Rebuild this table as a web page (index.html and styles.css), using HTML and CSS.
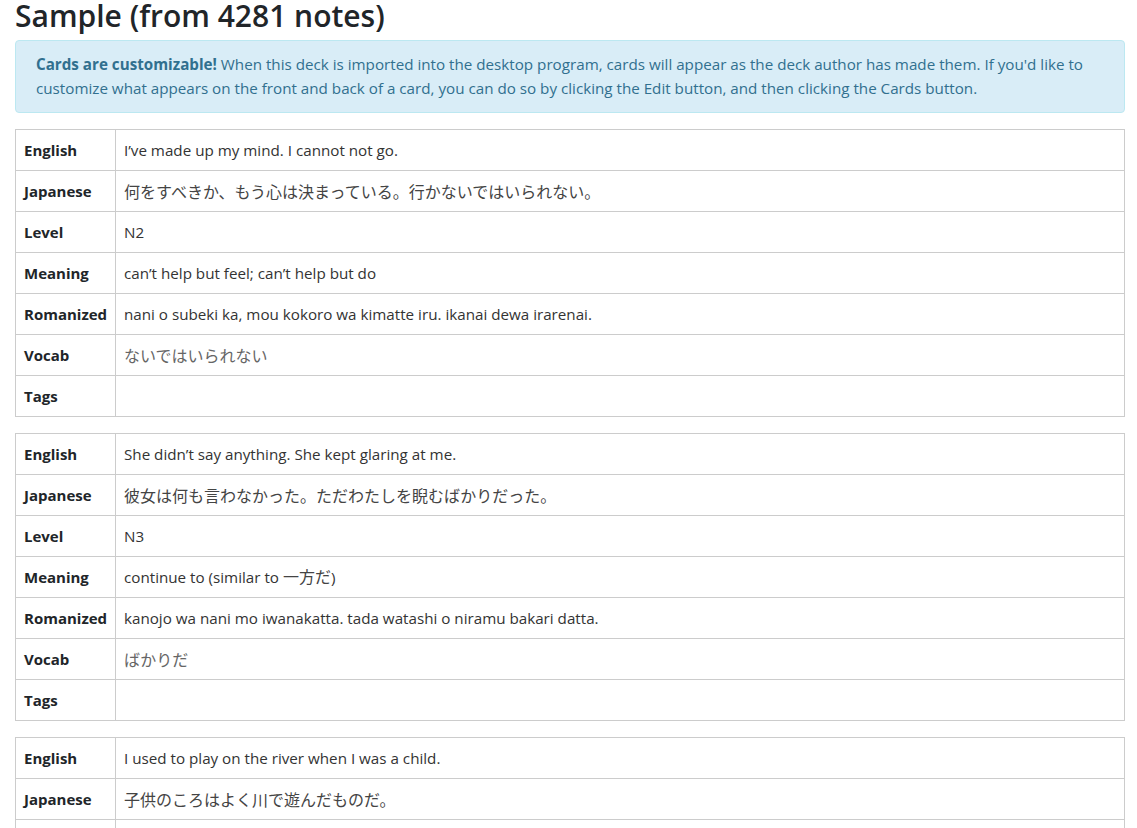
FILE: index.html
```html
<!DOCTYPE html>
<html lang="en">
<head>
<meta charset="utf-8">
<title>Sample</title>
<link rel="stylesheet" href="styles.css">
</head>
<body>
<div class="container">
  <h2 class="title">Sample (from 4281 notes)</h2>
  <div class="alert"><b>Cards are customizable!</b> When this deck is imported into the desktop program, cards will appear as the deck author has made them. If you'd like to customize what appears on the front and back of a card, you can do so by clicking the Edit button, and then clicking the Cards button.</div>

  <table class="note">
    <tr><th>English</th><td>I’ve made up my mind. I cannot not go.</td></tr>
    <tr><th>Japanese</th><td class="ja">何をすべきか、もう心は決まっている。行かないではいられない。</td></tr>
    <tr><th>Level</th><td>N2</td></tr>
    <tr><th>Meaning</th><td>can’t help but feel; can’t help but do</td></tr>
    <tr><th>Romanized</th><td>nani o subeki ka, mou kokoro wa kimatte iru. ikanai dewa irarenai.</td></tr>
    <tr><th>Vocab</th><td class="ja vocab">ないではいられない</td></tr>
    <tr><th>Tags</th><td></td></tr>
  </table>

  <table class="note">
    <tr><th>English</th><td>She didn’t say anything. She kept glaring at me.</td></tr>
    <tr><th>Japanese</th><td class="ja">彼女は何も言わなかった。ただわたしを睨むばかりだった。</td></tr>
    <tr><th>Level</th><td>N3</td></tr>
    <tr><th>Meaning</th><td>continue to (similar to <span class="jp">一方だ</span>)</td></tr>
    <tr><th>Romanized</th><td>kanojo wa nani mo iwanakatta. tada watashi o niramu bakari datta.</td></tr>
    <tr><th>Vocab</th><td class="ja vocab">ばかりだ</td></tr>
    <tr><th>Tags</th><td></td></tr>
  </table>

  <table class="note">
    <tr><th>English</th><td>I used to play on the river when I was a child.</td></tr>
    <tr><th>Japanese</th><td class="ja">子供のころはよく川で遊んだものだ。</td></tr>
    <tr><th>Level</th><td>N3</td></tr>
    <tr><th>Meaning</th><td>used to do</td></tr>
    <tr><th>Romanized</th><td>kodomo no koro wa yoku kawa de asonda mono da.</td></tr>
    <tr><th>Vocab</th><td class="ja vocab">ものだ</td></tr>
    <tr><th>Tags</th><td></td></tr>
  </table>
</div>
</body>
</html>
```
FILE: styles.css
```css
html, body {
  margin: 0;
  padding: 0;
  background: #fff;
}
body {
  font-family: "Open Sans", "Noto Sans CJK JP", sans-serif;
  font-size: 15.2px;
  line-height: 24px;
  color: #212529;
}
.container {
  padding: 0 12px 0 15px;
}
.title {
  margin: 0 0 8px;
  font-size: 30px;
  line-height: 32px;
  font-weight: 600;
  color: #212529;
}
.alert {
  background: #d9edf7;
  border: 1px solid #bce8f1;
  color: #31708f;
  border-radius: 4px;
  padding: 11px 20px 12px;
  margin-bottom: 16px;
}
.alert b {
  font-weight: 700;
}
.note {
  width: 100%;
  border-collapse: collapse;
  table-layout: fixed;
  margin-bottom: 16px;
}
.note th, .note td {
  border: 1px solid #ccc;
  padding: 8px;
  text-align: left;
  vertical-align: top;
  height: 24px;
}
.note th {
  width: 83px;
  font-weight: 700;
  font-size: 15px;
  white-space: nowrap;
}
.note td {
  color: #333;
}
.note .ja, .note .jp {
  font-family: "Noto Sans CJK JP", sans-serif;
  font-size: 16px;
  color: #444;
}
.note .jp {
  line-height: 1;
}
.note .vocab {
  color: #666;
}
```
